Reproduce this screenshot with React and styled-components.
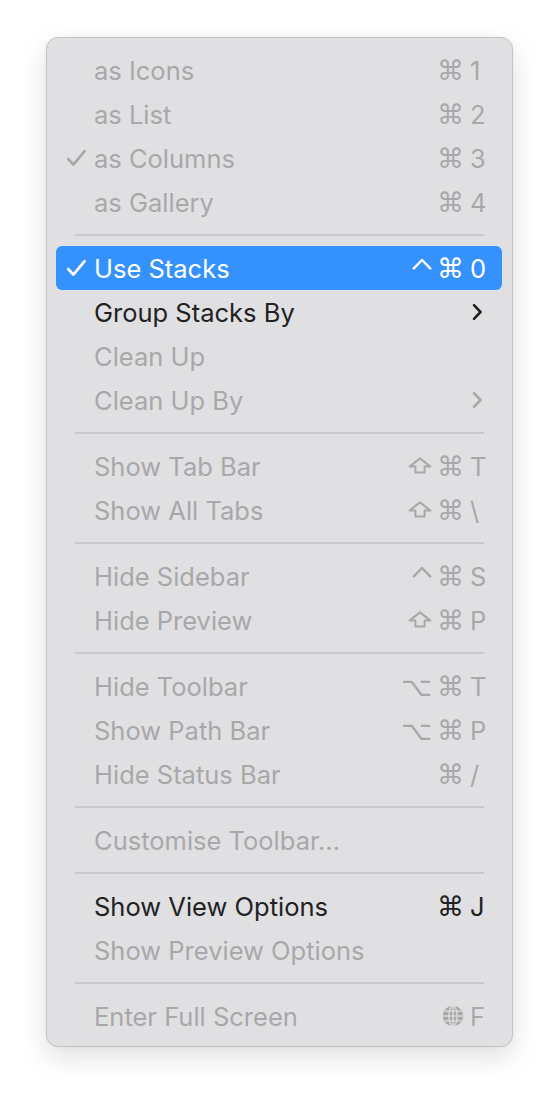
import React from "react";
import styled, { createGlobalStyle, css } from "styled-components";

const Global = createGlobalStyle`
  html, body { margin: 0; padding: 0; background: #ffffff; }
  body { font-family: Inter, "Noto Sans", "DejaVu Sans", sans-serif; }
`;

const Page = styled.div`
  padding: 37px 0 0 46px;
  height: 1102px;
  box-sizing: border-box;
`;

const Menu = styled.div`
  width: 467px;
  box-sizing: border-box;
  background: #e0e0e2;
  border: 1px solid #c4c4c6;
  border-radius: 12px;
  box-shadow: 0 10px 28px rgba(0, 0, 0, 0.13), 0 0 3px rgba(0, 0, 0, 0.06);
  padding: 10px 10px 8px 9px;
  display: flex;
  flex-direction: column;
`;

const Row = styled.div`
  height: 44px;
  border-radius: 6px;
  display: grid;
  grid-template-columns: 39px 1fr auto;
  align-items: center;
  padding-right: 14px;
  font-size: 25.5px;
  letter-spacing: 0;
  color: ${(p) => (p.$enabled ? "#222224" : "#a8a8aa")};
  ${(p) =>
    p.$active &&
    css`
      background: #3592fd;
      color: #ffffff;
    `}
`;

const CheckCell = styled.div`
  display: flex;
  align-items: center;
  padding-left: 10px;
  height: 100%;
`;

const Label = styled.span`
  white-space: nowrap;
  margin-left: -1px;
`;

const Shortcut = styled.div`
  display: flex;
  align-items: center;
  gap: 6px;
`;

const Mods = styled.span`
  display: flex;
  align-items: center;
  gap: 5px;
  font-family: "DejaVu Sans", sans-serif;
  font-size: 27px;
  line-height: 1;
`;

const Mod = styled.span`
  display: flex;
  align-items: center;
  margin-top: ${(p) => (p.$raise ? `-${p.$raise}px` : "0")};
`;

const Key = styled.span`
  width: 18px;
  text-align: left;
  font-size: 25.5px;
`;

const Separator = styled.div`
  height: 22px;
  display: flex;
  align-items: center;
  padding: 0 18px 0 19px;
  &::after {
    content: "";
    flex: 1;
    height: 2px;
    background: #cacacc;
  }
`;

const Check = () => (
  <svg width="21" height="18" viewBox="0 0 21 18" fill="none">
    <path
      d="M2.2 10 L7.4 15.6 L18.6 2.2"
      stroke="currentColor"
      strokeWidth="2.7"
      strokeLinecap="round"
      strokeLinejoin="round"
    />
  </svg>
);

const Chevron = () => (
  <svg width="19" height="18" viewBox="0 0 19 18" fill="none">
    <path
      d="M5 2.2 L11.5 9 L5 15.8"
      stroke="currentColor"
      strokeWidth="2.6"
      strokeLinecap="round"
      strokeLinejoin="round"
    />
  </svg>
);

const ShiftIcon = () => (
  <svg width="24" height="17" viewBox="0 0 24 17" fill="none" aria-label="⇧">
    <path
      d="M12 1.4 L22.4 9.6 H16.6 V15.6 H7.4 V9.6 H1.6 Z"
      stroke="currentColor"
      strokeWidth="2"
      strokeLinejoin="round"
    />
  </svg>
);

const ControlIcon = () => (
  <svg width="20" height="12" viewBox="0 0 20 12" fill="none" aria-label="⌃">
    <path
      d="M1.8 10.4 L10 2 L18.2 10.4"
      stroke="currentColor"
      strokeWidth="2.4"
      strokeLinecap="round"
      strokeLinejoin="round"
    />
  </svg>
);

const Globe = () => (
  <svg width="22" height="22" viewBox="0 0 20 20">
    <circle cx="10" cy="10" r="9.3" fill="currentColor" />
    <g stroke="#e0e0e2" strokeWidth="1.15" fill="none">
      <ellipse cx="10" cy="10" rx="3.8" ry="9.1" />
      <line x1="10" y1="0.8" x2="10" y2="19.2" />
      <line x1="0.8" y1="10" x2="19.2" y2="10" />
      <path d="M2.4 5.6 H17.6 M2.4 14.4 H17.6" />
    </g>
  </svg>
);

const renderMod = (m, j) => {
  if (m === "⇧")
    return (
      <Mod key={j} $raise={1}>
        <ShiftIcon />
      </Mod>
    );
  if (m === "⌃")
    return (
      <Mod key={j} $raise={8}>
        <ControlIcon />
      </Mod>
    );
  return <Mod key={j}>{m}</Mod>;
};

const items = [
  { label: "as Icons", mods: "⌘", key: "1" },
  { label: "as List", mods: "⌘", key: "2" },
  { label: "as Columns", mods: "⌘", key: "3", checked: true },
  { label: "as Gallery", mods: "⌘", key: "4" },
  "sep",
  { label: "Use Stacks", mods: "⌃⌘", key: "0", checked: true, active: true, enabled: true },
  { label: "Group Stacks By", submenu: true, enabled: true },
  { label: "Clean Up" },
  { label: "Clean Up By", submenu: true },
  "sep",
  { label: "Show Tab Bar", mods: "⇧⌘", key: "T" },
  { label: "Show All Tabs", mods: "⇧⌘", key: "\\" },
  "sep",
  { label: "Hide Sidebar", mods: "⌃⌘", key: "S" },
  { label: "Hide Preview", mods: "⇧⌘", key: "P" },
  "sep",
  { label: "Hide Toolbar", mods: "⌥⌘", key: "T" },
  { label: "Show Path Bar", mods: "⌥⌘", key: "P" },
  { label: "Hide Status Bar", mods: "⌘", key: "/" },
  "sep",
  { label: "Customise Toolbar…" },
  "sep",
  { label: "Show View Options", mods: "⌘", key: "J", enabled: true },
  { label: "Show Preview Options" },
  "sep",
  { label: "Enter Full Screen", globe: true, key: "F" },
];

export default function App() {
  return (
    <>
      <Global />
      <Page>
        <Menu>
          {items.map((it, i) =>
            it === "sep" ? (
              <Separator key={i} />
            ) : (
              <Row key={i} $enabled={it.enabled} $active={it.active}>
                <CheckCell>{it.checked && <Check />}</CheckCell>
                <Label>{it.label}</Label>
                {it.submenu ? (
                  <Shortcut>
                    <Chevron />
                  </Shortcut>
                ) : it.key ? (
                  <Shortcut>
                    <Mods>{it.globe ? <Globe /> : it.mods.split("").map(renderMod)}</Mods>
                    <Key>{it.key}</Key>
                  </Shortcut>
                ) : null}
              </Row>
            )
          )}
        </Menu>
      </Page>
    </>
  );
}
